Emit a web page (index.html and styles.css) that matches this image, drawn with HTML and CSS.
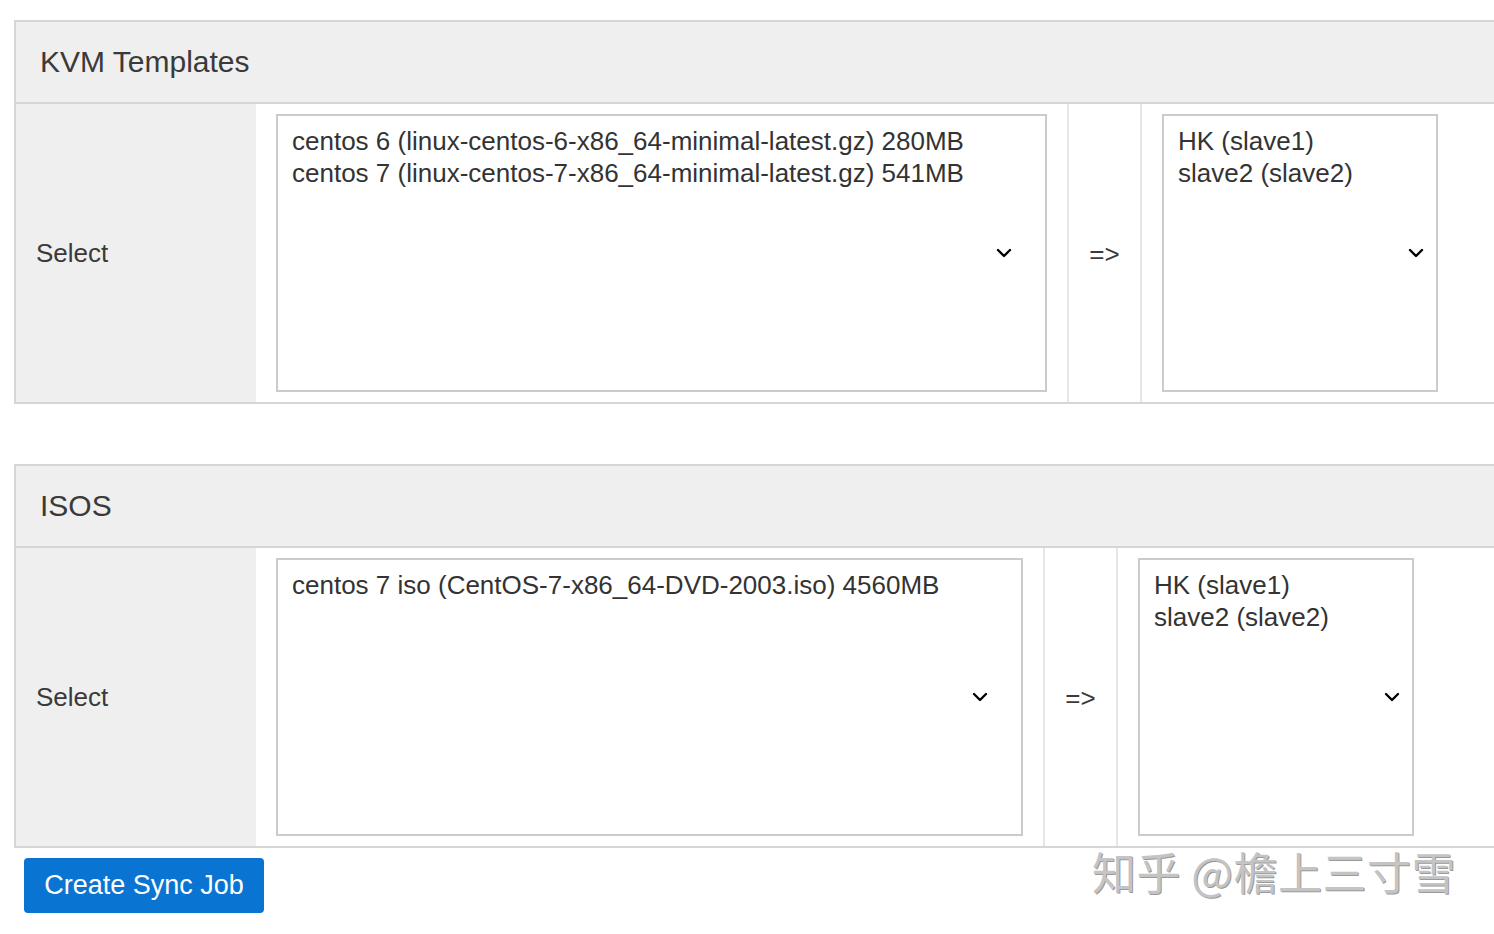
FILE: index.html
```html
<!DOCTYPE html>
<html>
<head>
<meta charset="utf-8">
<link rel="stylesheet" href="styles.css">
</head>
<body>
<div class="page">
  <section class="panel panel-kvm">
    <div class="panel-head">KVM Templates</div>
    <div class="panel-row">
      <div class="label-cell">Select</div>
      <div class="src-cell">
        <div class="listbox">
          <div class="opts">
            <div>centos 6 (linux-centos-6-x86_64-minimal-latest.gz) 280MB</div>
            <div>centos 7 (linux-centos-7-x86_64-minimal-latest.gz) 541MB</div>
          </div>
          <svg class="chev" width="16" height="10" viewBox="0 0 16 10"><path d="M2 2 L8 8 L14 2" fill="none" stroke="#000" stroke-width="2.4" stroke-linecap="round" stroke-linejoin="round"/></svg>
        </div>
      </div>
      <div class="arrow-cell">=&gt;</div>
      <div class="dst-cell">
        <div class="listbox">
          <div class="opts">
            <div>HK (slave1)</div>
            <div>slave2 (slave2)</div>
          </div>
          <svg class="chev" width="16" height="10" viewBox="0 0 16 10"><path d="M2 2 L8 8 L14 2" fill="none" stroke="#000" stroke-width="2.4" stroke-linecap="round" stroke-linejoin="round"/></svg>
        </div>
      </div>
    </div>
  </section>

  <section class="panel panel-iso">
    <div class="panel-head">ISOS</div>
    <div class="panel-row">
      <div class="label-cell">Select</div>
      <div class="src-cell">
        <div class="listbox">
          <div class="opts">
            <div>centos 7 iso (CentOS-7-x86_64-DVD-2003.iso) 4560MB</div>
          </div>
          <svg class="chev" width="16" height="10" viewBox="0 0 16 10"><path d="M2 2 L8 8 L14 2" fill="none" stroke="#000" stroke-width="2.4" stroke-linecap="round" stroke-linejoin="round"/></svg>
        </div>
      </div>
      <div class="arrow-cell">=&gt;</div>
      <div class="dst-cell">
        <div class="listbox">
          <div class="opts">
            <div>HK (slave1)</div>
            <div>slave2 (slave2)</div>
          </div>
          <svg class="chev" width="16" height="10" viewBox="0 0 16 10"><path d="M2 2 L8 8 L14 2" fill="none" stroke="#000" stroke-width="2.4" stroke-linecap="round" stroke-linejoin="round"/></svg>
        </div>
      </div>
    </div>
  </section>

  <div class="actions">
    <button class="btn-primary">Create Sync Job</button>
    <div class="watermark">知乎 @檐上三寸雪</div>
  </div>
</div>
</body>
</html>
```

FILE: styles.css
```css
html, body {
  margin: 0;
  padding: 0;
  background: #fff;
  overflow: hidden;
}
body {
  font-family: "Liberation Sans", Arial, "Noto Sans CJK SC", sans-serif;
  color: #333;
  width: 1494px;
  height: 934px;
}
.page {
  padding: 20px 0 0 14px;
}
.panel {
  width: 1540px;
  border: 2px solid #d6d6d6;
  border-right: none;
  box-sizing: border-box;
}
.panel + .panel {
  margin-top: 60px;
}
.panel-head {
  background: #efefef;
  height: 80px;
  border-bottom: 2px solid #d6d6d6;
  display: flex;
  align-items: center;
  padding-left: 24px;
  font-size: 30px;
  color: #3a3a3a;
}
.panel-row {
  display: flex;
  height: 298px;
}
.label-cell {
  width: 240px;
  background: #efefef;
  display: flex;
  align-items: center;
  padding-left: 20px;
  box-sizing: border-box;
  font-size: 26px;
  color: #3a3a3a;
}
.src-cell, .dst-cell {
  padding: 10px 20px 10px 20px;
  box-sizing: border-box;
  display: flex;
}
.panel-kvm .src-cell { width: 813px; }
.panel-iso .src-cell { width: 789px; }
.src-cell {
  border-right: 2px solid #e6e6e6;
}
.arrow-cell {
  width: 73px;
  border-right: 2px solid #e6e6e6;
  display: flex;
  align-items: center;
  justify-content: center;
  font-size: 26px;
  color: #3a3a3a;
  box-sizing: border-box;
  padding-top: 2px;
}
.dst-cell .listbox { width: 276px; flex: none; }
.listbox {
  flex: 1;
  border: 2px solid #cbcbcb;
  box-sizing: border-box;
  position: relative;
  display: flex;
  align-items: center;
}
.opts {
  position: absolute;
  top: 9px;
  left: 14px;
  font-size: 26px;
  line-height: 32px;
  color: #333;
  white-space: nowrap;
}
.chev {
  margin-left: auto;
  margin-right: 33px;
}
.dst-cell .chev {
  margin-right: 12px;
}
.actions {
  position: relative;
  padding: 10px 0 0 10px;
}
.btn-primary {
  width: 240px;
  height: 55px;
  background: #0a74d2;
  color: #fff;
  border: none;
  border-radius: 4px;
  font-family: "Liberation Sans", Arial, sans-serif;
  font-size: 27px;
  padding: 0;
}
.watermark {
  position: absolute;
  left: 1078px;
  top: -9px;
  font-family: "Noto Sans CJK SC", sans-serif;
  font-size: 44px;
  color: #c4c4c4;
  letter-spacing: 0.5px;
  text-shadow: 1px 1px 0 #9a9a9a;
  white-space: nowrap;
}
```
